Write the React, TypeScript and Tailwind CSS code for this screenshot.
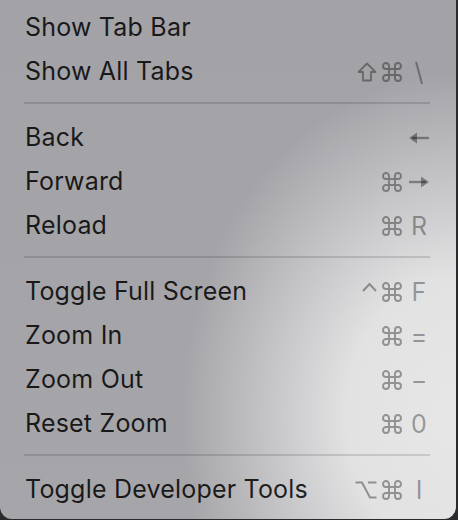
import { Command } from "lucide-react";

type Item = { label: string; mods?: string[]; key?: string };

const groups: Item[][] = [
  [
    { label: "Show Tab Bar" },
    { label: "Show All Tabs", mods: ["shift", "cmd"], key: "\\" },
  ],
  [
    { label: "Back", key: "left" },
    { label: "Forward", mods: ["cmd"], key: "right" },
    { label: "Reload", mods: ["cmd"], key: "R" },
  ],
  [
    { label: "Toggle Full Screen", mods: ["ctrl", "cmd"], key: "F" },
    { label: "Zoom In", mods: ["cmd"], key: "=" },
    { label: "Zoom Out", mods: ["cmd"], key: "−" },
    { label: "Reset Zoom", mods: ["cmd"], key: "0" },
  ],
  [{ label: "Toggle Developer Tools", mods: ["opt", "cmd"], key: "I" }],
];

function Mod({ name }: { name: string }) {
  if (name === "cmd") return <Command size={24} strokeWidth={1.9} className="ml-[3px]" />;
  if (name === "shift")
    return (
      <svg width="20" height="20" viewBox="0 0 20 20" fill="none" stroke="currentColor" strokeWidth="1.8" strokeLinejoin="round">
        <path d="M10 1.5L18.5 10H14V18.5H6V10H1.5Z" />
      </svg>
    );
  if (name === "opt")
    return (
      <svg width="22" height="18" viewBox="0 0 22 18" fill="none" stroke="currentColor" strokeWidth="2">
        <path d="M0.5 1.5h6.5l8 15h6.5" />
        <path d="M13 1.5h8.5" />
      </svg>
    );
  return (
    <svg width="15" height="10" viewBox="0 0 15 10" fill="none" stroke="currentColor" strokeWidth="2" className="-mt-[10px]">
      <path d="M1 9L7.5 2 14 9" />
    </svg>
  );
}

function Arrow({ dir }: { dir: "left" | "right" }) {
  return (
    <svg width="22" height="14" viewBox="0 0 22 14" className={dir === "right" ? "rotate-180" : ""}>
      <path d="M4 7h17" stroke="currentColor" strokeWidth="2.4" />
      <path d="M1 7l8-5.5v11z" fill="currentColor" />
    </svg>
  );
}

function Shortcut({ mods, k }: { mods?: string[]; k?: string }) {
  if (!k) return null;
  return (
    <div className="flex items-center text-black/[0.36]">
      <div className="flex items-center justify-end">
        {mods?.map((m) => <Mod key={m} name={m} />)}
      </div>
      <div className="w-[24px] ml-[3px] flex justify-center text-[25px] leading-none">
        {k === "left" || k === "right" ? <Arrow dir={k} /> : k}
      </div>
    </div>
  );
}

export default function App() {
  return (
    <div className="w-[458px] h-[520px] bg-[#2a2a2c] font-['Inter','Liberation_Sans',sans-serif]">
      <div className="w-[456px] h-[519px] rounded-b-[12px] pt-[6px] bg-[radial-gradient(ellipse_60%_66%_at_100%_80%,#e7e7e8_0%,#e2e2e3_40%,rgba(226,226,227,0)_100%),linear-gradient(180deg,#a2a2a7_0%,#a6a6aa_100%)]">
        {groups.map((g, gi) => (
          <div key={gi}>
            {gi > 0 && (
              <div className="h-[22px] pt-[8px] pl-[24px] pr-[26px]">
                <div className="h-[2px] w-full bg-black/[0.13]" />
              </div>
            )}
            {g.map((it) => (
              <div key={it.label} className="h-[44px] flex items-center pl-[25px] pr-[25px]">
                <span className="flex-1 text-[25px] tracking-[0.2px] text-black/[0.86]">{it.label}</span>
                <Shortcut mods={it.mods} k={it.key} />
              </div>
            ))}
          </div>
        ))}
      </div>
    </div>
  );
}
